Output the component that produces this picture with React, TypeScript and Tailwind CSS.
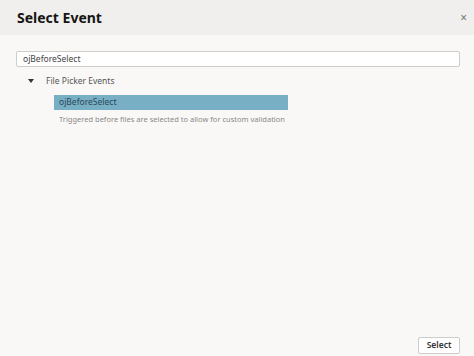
import React from "react";

export default function App() {
  return (
    <div
      className="w-[474px] h-[356px] bg-[#f9f8f7] flex flex-col overflow-hidden"
      style={{ fontFamily: '"Noto Sans", "Liberation Sans", sans-serif' }}
    >
      <div className="h-[35px] shrink-0 bg-[#f0efed] flex items-center justify-between pl-[17px] pr-[7px] pt-[1px]">
        <div className="text-[14px] font-bold text-[#161513] leading-none">Select Event</div>
        <div className="text-[12px] text-[#777] leading-none">×</div>
      </div>
      <div className="flex-1 flex flex-col pl-[16px] pr-[14px] pt-[16px]">
        <div className="h-[16px] border border-[#cfcdc9] bg-white rounded-[2px] flex items-center pl-[6px] text-[8.5px] text-[#444]">
          ojBeforeSelect
        </div>
        <div className="flex items-center h-[14px] mt-[7px] text-[8.5px] text-[#555]">
          <span className="ml-[12px] w-0 h-0 border-l-[3px] border-r-[3px] border-t-[4px] border-l-transparent border-r-transparent border-t-[#333]"></span>
          <span className="ml-[12px]">File Picker Events</span>
        </div>
        <div className="ml-[38px] mt-[7px] w-[234px] h-[15px] bg-[#78afc4] flex items-center pl-[5px] text-[8.5px] text-[#2a4a56]">
          ojBeforeSelect
        </div>
        <div className="ml-[43px] mt-[4px] text-[7.5px] text-[#8a8886]">
          Triggered before files are selected to allow for custom validation
        </div>
        <div className="flex-1"></div>
        <div className="flex justify-end pb-[2px]">
          <div className="h-[17px] w-[42px] border border-[#cfcdc9] bg-white rounded-[2px] flex items-center justify-center text-[8.5px] font-semibold text-[#333]">
            Select
          </div>
        </div>
      </div>
    </div>
  );
}
